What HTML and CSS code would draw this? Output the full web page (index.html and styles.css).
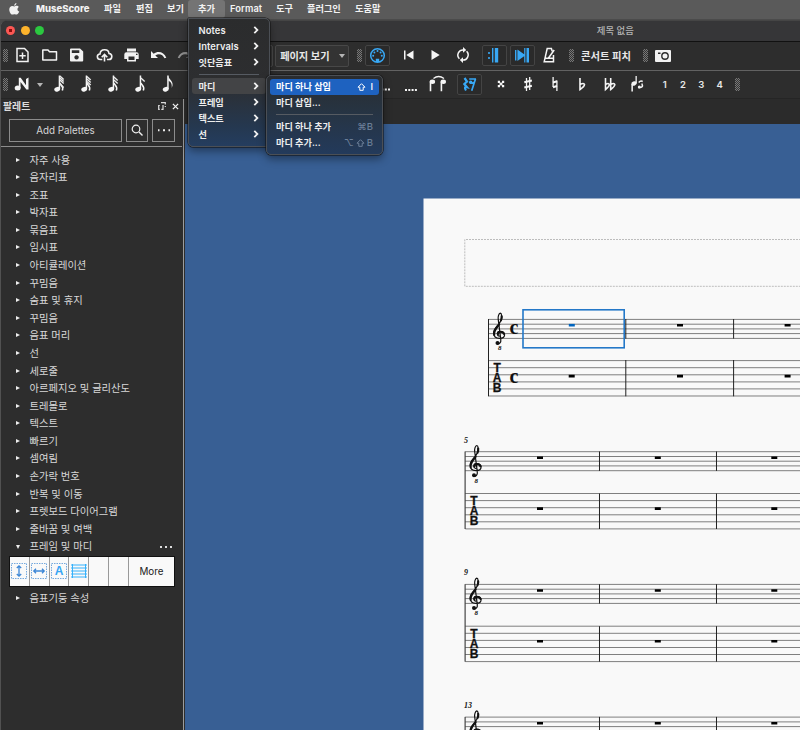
FILE: index.html
```html
<!DOCTYPE html>
<html lang="ko">
<head>
<meta charset="utf-8">
<title>MuseScore</title>
<link rel="stylesheet" href="styles.css">
</head>
<body>
<svg class="defs" width="0" height="0">
  <defs>
    <symbol id="chev" viewBox="0 0 6 8"><path d="M1.3.8 4.4 4 1.3 7.200" fill="none" stroke="#f2f2f2" stroke-width="1.800"/></symbol>
    <g id="note"><ellipse cx="-2.300" cy="5.300" rx="3" ry="2.300" transform="rotate(-20 -2.300 5.300)"/><path d="M-.8-8.500H.700V5H-.8z"/></g>
    <path id="flag" d="M.4-1C1 1.400 4.600 2 2.800 6.500" fill="none" stroke="#f5f5f5" stroke-width="1.600"/>
    <path id="hook" d="M.4-1 4.200 2.600" fill="none" stroke="#ececec" stroke-width="1.400"/>
    <g id="clef" fill="none" stroke="#111" stroke-linecap="round">
      <path stroke-width="1.200" d="M11.200 17C8.600 16.400 8.600 12.400 11.600 12.100 14.600 11.900 16.600 13.600 16.600 15.600 16.600 18 14.200 19.200 11.600 19.200 7.400 19.200 5.600 16.400 5.600 13.600 5.600 10 8.600 7.600 11 4.600 12.800 2.200 14-.6 13.600-3.600 13.500-5.200 12.900-6 12.300-6 10.800-5.800 9.800-2.400 10.200 0L12.800 20.400C13.200 23.400 11.400 24.900 9.600 24.800"/>
      <path stroke-width="2.100" d="M6.200 15.800C5.200 11.800 8.400 8.600 11.200 5.200M13 1.200Q14-.8 13.700-3M9.900 15Q9.800 13 12 12.600 15.200 12.400 16 14.800"/>
      <circle cx="9.500" cy="23.700" r="2" fill="#111" stroke="none"/>
      <text x="10" y="31" class="octave">8</text>
    </g>
    <g id="tab">
      <path class="line" d="M.5.3H340M.5 7.400H340M.5 14.500H340M.5 21.600H340M.5 28.600H340M.5 35.700H340"/>
      <text class="tabtext" x="9.200" y="12">T</text><text class="tabtext" x="9.200" y="21.900">A</text><text class="tabtext" x="9.200" y="31.700">B</text>
    </g>
    <g id="staff"><path class="line" d="M.5.2H340M.5 5H340M.5 9.700H340M.5 14.400H340M.5 19.200H340"/></g>
    <g id="system">
      <use href="#staff"/><use href="#tab" y="41.700"/><use href="#clef" x="-.3"/>
      <path class="bar" d="M.3 0V77.500M134.700 0V19.400M251.700 0V19.400M134.700 42V77.500M251.700 42V77.500"/>
      <path class="rest" d="M72.200 5h6v2.600h-6zM190 5h6v2.600h-6zM306.500 5h6v2.600h-6zM72.200 55.800h6v2.600h-6zM190 55.800h6v2.600h-6zM306.500 55.800h6v2.600h-6z"/>
    </g>
  </defs>
</svg>

<header class="menubar">
  <svg class="apple" viewBox="0 0 12 13"><path d="M8.1 0C8.2 1.500 7 2.900 5.700 2.900 5.600 1.500 6.800.2 8.100 0ZM5.900 3.700C6.500 3.700 7.200 3 8.300 3 9.300 3 10.200 3.500 10.700 4.300 8.500 5.600 8.900 8.600 11.200 9.300 10.600 10.900 9.500 12.600 8.300 12.600 7.400 12.600 7.100 12.100 6 12.100 4.900 12.100 4.500 12.600 3.700 12.600 2.100 12.600.3 9.600.3 7 .3 4.500 1.900 3.100 3.500 3.100 4.500 3.100 5.300 3.700 5.900 3.700Z" fill="#f2f2f2"/></svg>
  <span class="app">MuseScore</span><span class="m m1">파일</span><span class="m m2">편집</span><span class="m m3">보기</span><span class="m m4">추가</span><span class="m m5">Format</span><span class="m m6">도구</span><span class="m m7">플러그인</span><span class="m m8">도움말</span>
</header>

<div class="window">
  <div class="titlebar"><i class="dot red"></i><i class="dot yellow"></i><i class="dot green"></i><span class="title">제목 없음</span></div>

  <div class="toolbar first">
    <i class="grip"></i>
    <svg class="ic" viewBox="-12.500 -12 25 25"><path d="M-5.500-6.500H2L5.500-3V6.500H-5.500ZM0-2.500V4M-3.200.8H3.200" fill="none" stroke="#f2f2f2" stroke-width="1.500"/></svg>
    <svg class="ic" viewBox="-12.500 -12 25 25"><path d="M-6.700 5V-5H-1.500L0-3.300H7V5Z" fill="none" stroke="#f2f2f2" stroke-width="1.500" stroke-linejoin="round"/></svg>
    <svg class="ic" viewBox="-12.500 -12 25 25"><path fill="#f2f2f2" fill-rule="evenodd" d="M-5.500-6.500H3.500L6.700-3.500V5.500Q6.700 6.500 5.700 6.500H-5.500Q-6.500 6.500-6.500 5.500V-5.500Q-6.500-6.500-5.500-6.500ZM-4.700-4.700V-2H2.800V-4.700ZM0 .2A2.200 2.200 0 1 0 .1.200Z"/></svg>
    <svg class="ic" viewBox="-12.500 -12 25 25"><path d="M-2.200 4.500H-4C-8.200 4.500-8-1-4.500-1-4-6.500 4-6.500 4.500-1.500 8.500-1.200 8 4.500 4.500 4.500H2.400M0 6.500V-.2M-2.800 2.200 0-.6 2.800 2.200" fill="none" stroke="#f2f2f2" stroke-width="1.600"/></svg>
    <svg class="ic" viewBox="-12.500 -12 25 25"><path fill="#f2f2f2" fill-rule="evenodd" d="M-4.500-6.500H4.500V-3.600H-4.500ZM-5-2.800H5Q7.200-2.800 7.200-.6V4H4.500V6.600H-4.500V4H-7.200V-.6Q-7.200-2.800-5-2.800ZM-3 1.500V5H3V1.500ZM4.500-1.300V0H6V-1.300Z"/></svg>
    <svg class="ic" viewBox="-12.500 -12 25 25"><path fill="#f2f2f2" d="M-7.500-4V3H-.5L-3.200.4C.5-2.200 4.500-.5 6 3.300L7.800 2.700C5.600-3-.5-4.400-4.800-1.200Z"/></svg>
    <svg class="ic dim" viewBox="-12.500 -12 25 25"><path fill="#f2f2f2" d="M7.500-4V3H.5L3.200.4C-.5-2.200-4.500-.5-6 3.300L-7.800 2.700C-5.600-3 .5-4.400 4.800-1.200Z"/></svg>
    <span class="combo zoomer"></span>
    <span class="combo view">페이지 보기<i class="caret"></i></span>
    <i class="grip g2"></i>
    <svg class="ic on midi" viewBox="-12 -10 25 21"><circle r="6.800" cx=".5" cy=".5" fill="none" stroke="#38a8f5" stroke-width="1.500"/><g fill="#38a8f5"><circle cx="-3.800" cy=".8" r="1"/><circle cx="-2.600" cy="-2.500" r="1"/><circle cx=".5" cy="-3.900" r="1"/><circle cx="3.600" cy="-2.500" r="1"/><circle cx="4.800" cy=".8" r="1"/><path d="M-1.200 3.800h3.400V7h-3.400z"/></g></svg>
    <svg class="ic after" viewBox="-13 -12 25 25"><path fill="#f5f5f5" d="M-5-4.500H-3.500V4.500H-5ZM4.500-4.500V4.500L-2.700 0Z"/></svg>
    <svg class="ic" viewBox="-12 -12 25 25"><path fill="#f5f5f5" d="M-3.500-5V5L4.700 0Z"/></svg>
    <svg class="ic" viewBox="-12 -12 25 25"><path fill="none" stroke="#f5f5f5" stroke-width="1.500" d="M-3.600 3.800A5.200 5.200 0 0 1 1-5M3.600-3.800A5.200 5.200 0 0 1-1 5"/><path fill="#f5f5f5" d="M0-8V-2.200L3.200-5ZM0 8V2.200L-3.200 5Z"/></svg>
    <svg class="ic on repeat" viewBox="-12 -10 25 21"><g fill="#38a8f5"><circle cx="-5" cy="-2" r="1.100"/><circle cx="-5" cy="3" r="1.100"/><path d="M-2-7H-.6V7.500H-2ZM.8-7H4.200V7.500H.8Z"/></g></svg>
    <svg class="ic on" viewBox="-12 -10 25 21"><path fill="#38a8f5" d="M-7-5H-5.600V5.500H-7ZM-4.600-5.500 3.500.3-4.600 6ZM2.200-7H3.400V7.500H2.200ZM4.500-7H7V7.500H4.500Z"/></svg>
    <svg class="ic" viewBox="-12 -12 25 25"><path fill="none" stroke="#f5f5f5" stroke-width="1.500" d="M4.500 0V6.700H-4.800L-1.800-6.500H2.400L3.200-3.800M-3.500 3.300H4.500M-.5 3 5.200-5"/></svg>
    <i class="grip g3"></i><span class="pitch">콘서트 피치</span><i class="grip g4"></i>
    <svg class="camera" viewBox="0 0 16 12"><rect width="16" height="12" rx="1" fill="#f2f2f2"/><circle cx="10" cy="6" r="3.200" fill="none" stroke="#2d2d2d" stroke-width="1.400"/><path d="M3 2.500h2.500V4H3z" fill="#2d2d2d"/></svg>
  </div>

  <div class="toolbar second">
    <i class="grip"></i>
    <svg class="ic" viewBox="-12 -12 25 25"><g fill="#f5f5f5"><ellipse cx="-4.300" cy="4" rx="3" ry="2.500"/><path d="M-3.200-6.300 -1.300-6.300 4 1.300V-5L6.500-6.500V5.500H4.400L-1.500-2V4H-3.200Z"/></g></svg>
    <i class="caret c2"></i>
    <svg class="ic n1" viewBox="-11.500 -12 25 25"><g fill="#f5f5f5"><use href="#note"/><use href="#flag"/><use href="#hook" y="-7"/><use href="#hook" y="-5"/><use href="#hook" y="-3"/><use href="#hook" y="1"/></g></svg>
    <svg class="ic" viewBox="-11.500 -12 25 25"><g fill="#f5f5f5"><use href="#note"/><use href="#flag"/><use href="#hook" y="-6.500"/><use href="#hook" y="-4"/><use href="#hook" y="-1.500"/></g></svg>
    <svg class="ic" viewBox="-11.500 -12 25 25"><g fill="#f5f5f5"><use href="#note"/><use href="#flag"/><use href="#hook" y="-6"/><use href="#hook" y="-3"/></g></svg>
    <svg class="ic" viewBox="-11.500 -12 25 25"><g fill="#f5f5f5"><use href="#note"/><use href="#flag"/><use href="#hook" y="-5"/></g></svg>
    <svg class="ic" viewBox="-12 -12 25 25"><g fill="#f5f5f5"><use href="#note"/><path d="M0-8.500C.5-4.500 7-2.500 3.700 4 4.500-.5 2-3 .3-3.300Z"/></g></svg>
    <svg class="ic dots" viewBox="-12 -12 25 25"><path d="M-6 4.500h2v2h-2zM-2.500 4.500h2v2h-2zM.8 4.500h2v2h-2zM4 4.500h2v2h-2z" fill="#f5f5f5"/></svg>
    <svg class="ic" viewBox="-12 -12 25 25"><path d="M-6 5h2v2h-2zM-2.700 5h2v2h-2zM.6 5h2v2h-2zM3.900 5h2v2h-2z" fill="#f5f5f5"/></svg>
    <svg class="ic" viewBox="-12 -12 25 25"><g fill="#f5f5f5"><ellipse cx="-5.600" cy="-2.300" rx="2.700" ry="2.200"/><path d="M-8.300-2.500h1.600V7.200h-1.600z"/><ellipse cx="5.300" cy="-2.300" rx="2.700" ry="2.200"/><path d="M2.600-2.500h1.600V7.200h-1.600z"/><path d="M-4.500-5.500Q.5-9.500 6-5.500" fill="none" stroke="#f5f5f5" stroke-width="1.300"/></g></svg>
    <svg class="ic on rests" viewBox="-12 -10 25 21"><g fill="none" stroke="#38a8f5"><path stroke-width="2.200" d="M-4.500-6-2-2.500-4.700 0-2 3.200Q-5.500 2.500-3 6.500"/><path stroke-width="1.700" d="M.2-5H7M1-1.500Q4 0 5.500-2L2.700 6.800M5.500-2 6.500-5"/></g><circle cx="1.700" cy="-1.700" r="1.700" fill="#38a8f5"/></svg>
    <svg class="ic acc" viewBox="-12 -12 25 25"><path d="M-2.500-2.500 2.500 2.500M2.500-2.500-2.500 2.500" stroke="#f5f5f5" stroke-width="1.300"/><path fill="#f5f5f5" d="M-3.200-3.200h2.200v2.200h-2.200zM1-3.200h2.200v2.200H1zM-3.200 1h2.200v2.200h-2.200zM1 1h2.200v2.200H1z"/></svg>
    <svg class="ic" viewBox="-12 -12 25 25"><path d="M-1.500-6V7M1.700-7V6" stroke="#f5f5f5" stroke-width="1.300"/><path d="M-3.700-1.700 3.900-3.500M-3.700 3.500 3.900 1.700" stroke="#f5f5f5" stroke-width="2"/></svg>
    <svg class="ic" viewBox="-12 -12 25 25"><path d="M-1.900-7V3M1.900-3.500V7" stroke="#f5f5f5" stroke-width="1.300"/><path d="M-2-1.500 2-2.700M-2 3.200 2 2" stroke="#f5f5f5" stroke-width="2.100"/></svg>
    <svg class="ic" viewBox="-12 -12 25 25"><path d="M-2-6V5.500Q2.500 2.500 2.500.5 2-1.500-2 .5" fill="none" stroke="#f5f5f5" stroke-width="1.600"/></svg>
    <svg class="ic" viewBox="-12 -12 25 25"><path d="M-4.500-6V5.500Q-.7 2.500-.7.500-1.200-1.500-4.500.5M.7-6V5.500Q4.800 2.500 4.800.5 4.300-1.500.7.500" fill="none" stroke="#f5f5f5" stroke-width="1.600"/></svg>
    <svg class="ic" viewBox="-12 -12 25 25"><g fill="#f5f5f5"><ellipse cx="-3" cy="-.5" rx="2.700" ry="2.100" transform="rotate(-25 -3 -.5)"/><path d="M-5.600 0h1.500V7.500h-1.500zM-1.500-8h1.300V-.5h-1.300z"/><path d="M1.500 3.500Q7 3.800 4.800-.5M1.700-1.500Q3.600-3.800 5.700-2.500" fill="none" stroke="#f5f5f5" stroke-width="1.500"/><circle cx="2.300" cy="3" r="1.500"/></g></svg>
    <span class="voice v1">1</span><span class="voice">2</span><span class="voice">3</span><span class="voice">4</span>
    <i class="grip g5"></i>
  </div>

  <div class="main">
    <aside class="palettes">
      <div class="phead"><b>팔레트</b>
        <svg viewBox="0 0 8 8" class="float"><path d="M3 .700H7.300V5M5 3V7.300H.700V3.500H3" fill="none" stroke="#ddd" stroke-width="1.200" stroke-dasharray="6 1.500"/></svg>
        <svg viewBox="0 0 8 8" class="close"><path d="M1 1 7 7M7 1 1 7" stroke="#eee" stroke-width="1.500"/></svg></div>
      <div class="pbtns"><span class="btn add">Add Palettes</span>
        <span class="btn sq"><svg viewBox="0 0 12 12"><circle cx="5" cy="5" r="3.800" fill="none" stroke="#eee" stroke-width="1.200"/><path d="M8 8 11.500 11.500" stroke="#eee" stroke-width="1.400"/></svg></span>
        <span class="btn sq"><svg viewBox="1 0 12 12"><path d="M.5 5.300h2v2h-2zM6 5.300h2v2H6zM11.500 5.300h2v2h-2z" fill="#eee"/></svg></span></div>
      <ul class="list">
        <li>자주 사용</li><li>음자리표</li><li>조표</li><li>박자표</li><li>묶음표</li><li>임시표</li><li>아티큘레이션</li><li>꾸밈음</li><li>숨표 및 휴지</li><li>꾸밈음</li><li>음표 머리</li><li>선</li><li>세로줄</li><li>아르페지오 및 글리산도</li><li>트레몰로</li><li>텍스트</li><li>빠르기</li><li>셈여림</li><li>손가락 번호</li><li>반복 및 이동</li><li>프렛보드 다이어그램</li><li>줄바꿈 및 여백</li><li class="open">프레임 및 마디<span class="more-dots"><i></i><i></i><i></i></span></li>
      </ul>
      <div class="cells">
        <span><svg viewBox="0 0 16 16"><rect x=".5" y=".5" width="15" height="15" class="dash"/><path class="arrow" d="M8 3.500V12.500M5.800 5 8 2.800 10.200 5M5.800 11 8 13.200 10.200 11"/></svg></span>
        <span><svg viewBox="0 0 16 16"><rect x=".5" y=".5" width="15" height="15" class="dash"/><path class="arrow" d="M3.500 8H12.500M5 5.800 2.800 8 5 10.200M11 5.800 13.200 8 11 10.200"/></svg></span>
        <span><svg viewBox="0 0 16 16"><rect x=".5" y=".5" width="15" height="15" class="dash"/><text x="8" y="12.200" class="frame-a">A</text></svg></span>
        <span><svg viewBox="0 0 16 16"><path d="M0 2H16M0 5H16M0 8H16M0 11H16M0 14H16M1.500 1V15M14.500 1V15" stroke="#35b1fb" stroke-width="1" fill="none"/></svg></span>
        <span></span><span></span><span class="more">More</span>
      </div>
      <ul class="list last"><li>음표기둥 속성</li></ul>
    </aside>
    <section class="document">
      <div class="tabs"></div>
      <div class="canvas">
        <svg class="score" width="376" height="532" viewBox="424 198 376 532">
          <rect x="423.500" y="198.500" width="377" height="532" fill="#f9f9f9"/>
          <path d="M810 239.500H464.800V286.300H810" fill="none" stroke="#bdbdbd" stroke-dasharray="2 1"/>
          <use href="#staff" x="488" y="319.200"/><use href="#tab" x="488" y="360.300"/><use href="#clef" x="488" y="319.200"/>
          <text class="time" x="509.500" y="333.500">c</text><text class="time" x="509.500" y="382.800">c</text>
          <path class="bar" d="M488.500 319V396.300M625.800 319V338.600M733.600 319V338.600M625.800 360V396.300M733.600 360V396.300"/>
          <path class="rest" d="M677 323.900h6v2.600h-6zM784.600 323.900h6v2.600h-6zM568.700 374.800h6v2.600h-6zM677 374.800h6v2.600h-6zM784.600 374.800h6v2.600h-6z"/>
          <path d="M568.800 323.900h6v2.600h-6z" fill="#0065bf"/>
          <rect x="523" y="309.800" width="101.200" height="38" fill="none" stroke="#2478c8" stroke-width="1.600"/>
          <use href="#system" x="464.800" y="451.500"/><use href="#system" x="464.800" y="584.200"/><use href="#system" x="464.800" y="716.900"/>
          <text class="num" x="464" y="442.800">5</text><text class="num" x="464" y="575.400">9</text><text class="num" x="464" y="707.500">13</text>
        </svg>
      </div>
    </section>
  </div>
</div>

<nav class="menu root">
  <div class="item en">Notes<svg><use href="#chev"/></svg></div>
  <div class="item en">Intervals<svg><use href="#chev"/></svg></div>
  <div class="item">잇단음표<svg><use href="#chev"/></svg></div>
  <hr>
  <div class="item active">마디<svg><use href="#chev"/></svg></div>
  <div class="item">프레임<svg><use href="#chev"/></svg></div>
  <div class="item">텍스트<svg><use href="#chev"/></svg></div>
  <div class="item">선<svg><use href="#chev"/></svg></div>
</nav>
<nav class="menu sub">
  <div class="item chosen">마디 하나 삽입<kbd><svg class="shift" viewBox="0 0 9 8"><path d="M4.500.7 8 4.200H6.200V7.300H2.800V4.200H1Z"/></svg>I</kbd></div>
  <div class="item">마디 삽입...</div>
  <hr>
  <div class="item">마디 하나 추가<kbd>⌘B</kbd></div>
  <div class="item">마디 추가...<kbd>⌥<svg class="shift" viewBox="0 0 9 8"><path d="M4.500.7 8 4.200H6.200V7.300H2.800V4.200H1Z"/></svg>B</kbd></div>
</nav>
</body>
</html>
```
FILE: styles.css
```css
* { box-sizing: border-box; }
body { margin: 0; width: 800px; height: 730px; overflow: hidden; background: #4b4b4b; color: #e8e8e8; font-family: Inter, "Noto Sans CJK KR", sans-serif; font-size: 10px; position: relative; }
.defs { position: absolute; }
.menubar { height: 19px; background: #5a5a5a; display: flex; align-items: center; font-size: 9.2px; font-weight: 600; white-space: nowrap; color: #f2f2f2; line-height: 17px; padding: 0 0 2px 9px; }
.apple { width: 11px; height: 12px; margin: 0 16px 0 0; }
.app { width: 68px; font-weight: 800; font-size: 9.5px; }
.m { flex: none; }
.m1 { width: 32px; } .m2 { width: 31px; } .m3 { width: 21px; }
.m4 { width: 37px; height: 18px; text-align: center; background: #747474; border-radius: 3px; margin-right: 5px; }
.m5 { width: 46px; font-size: 9.3px; font-weight: 600; letter-spacing: .1px; } .m6 { width: 31px; } .m7 { width: 48px; }

.window { margin-top: 1px; height: 710px; background: #2d2d2d; border-radius: 7px 0 0; border-left: 1px solid #515151; border-top: 1px solid #454545; overflow: hidden; }
.titlebar { height: 21px; background: #363638; display: flex; align-items: center; border-bottom: 1px solid #111; padding: 0 0 1px 5px; font-size: 9.4px; color: #b4b4b4; }
.dot { width: 9px; height: 9px; border-radius: 50%; margin-right: 5.6px; }
.red { background: radial-gradient(circle, #8a0d0d 0 1.5px, #fc5753 2px); }
.yellow { background: #fdb32c; }
.green { background: #2bc840; }
.title { margin-left: 547px; line-height: 16px; font-weight: 500; }
.toolbar { display: flex; align-items: center; }
.first { height: 29px; padding-bottom: 1px; border-bottom: 1px solid #626262; }
.second { height: 27px; }
.grip { width: 5px; height: 13px; margin: 0 6px 0 2px; flex: none; background: repeating-conic-gradient(#777 0 25%, #333 0 50%) 0 0 / 2px 2px; }
.toolbar .grip:first-child { margin-right: 2px; }
.ic { width: 25px; height: 25px; flex: none; margin-right: 2.2px; overflow: visible; }
.dim { opacity: .5; margin-right: 0; }
.on { background: #2a2a2a; border-radius: 2px; outline: 1px solid #444; outline-offset: -1px; height: 21px; }
.combo { height: 22px; border: 1px solid #484848; border-radius: 2px; background: #333; flex: none; }
.zoomer { width: 75px; }
.view { width: 74px; margin-left: 2px; display: flex; align-items: center; padding-left: 4px; font-size: 10.2px; font-weight: 600; white-space: nowrap; }
.caret { border: 3px solid transparent; border-top: 4px solid #b5b5b5; border-bottom: 0; flex: none; }
.view .caret { margin-left: auto; margin-right: 3px; }
.g2 { margin: 0 3px 0 8px; }
.midi { margin-right: 2px; }
.after { margin-left: 4px; }
.repeat { margin-left: 4.800px; }
.g3 { margin: 0 7px 0 5px; }
.pitch { width: 52px; font-size: 10.3px; font-weight: 600; white-space: nowrap; }
.g4 { margin: 0 7px 0 10px; }
.camera { width: 16px; height: 12px; }
.c2 { margin-left: 0; }
.n1 { margin-left: 4.500px; }
.dots { margin-left: 188px; }
.rests { margin-left: 3.500px; }
.acc { margin-left: 5px; }
.voice { width: 18.3px; text-align: center; font-size: 9.5px; font-weight: 600; }
.v1 { margin-left: 3.500px; }
.g5 { margin-left: 6px; }

.main { display: flex; height: 632px; border-top: 1px solid #252525; }
.palettes { width: 183px; border-right: 1px solid #9c9c9c; flex: none; }
.phead { display: flex; height: 16px; align-items: center; padding: 0 0 2px 2px; font-size: 9.9px; color: #ddd; }
.phead b { font-weight: 600; width: 155px; line-height: 14px; }
.float { width: 8px; height: 8px; margin-right: 6px; }
.close { width: 7px; height: 7px; }
.pbtns { display: flex; gap: 4px; padding: 4px 0 0 8px; height: 32px; border-bottom: 1px solid #8d8d8d; margin-right: 1px; }
.btn { height: 22.500px; border: 1px solid #8c8c8c; display: flex; align-items: center; justify-content: center; }
.add { width: 113px; font-size: 9.8px; color: #d5d5d5; }
.sq { width: 22px; }
.sq + .sq { width: 23px; }
.sq svg { width: 12px; height: 12px; }
.list { list-style: none; margin: 0; padding: 4.300px 0 0; }
.list li { height: 17.59px; display: flex; align-items: center; padding-left: 28.5px; font-size: 10.3px; color: #d8d8d8; white-space: nowrap; line-height: 17px; position: relative; }
.list li::before { content: ""; position: absolute; left: 15px; top: 6.300px; border: 2.300px solid transparent; border-left: 4px solid #ededed; border-right: 0; }
.list li.open::before { left: 14.500px; top: 7px; border: 2.300px solid transparent; border-top: 4px solid #ededed; border-bottom: 0; }
.more-dots { display: flex; gap: 3px; margin-left: 68px; }
.more-dots i { width: 2px; height: 2px; background: #ddd; }
.cells { display: flex; margin-left: 8px; width: 166px; height: 31px; border: 1px solid #111; background: #f9f9f9; }
.cells span { width: 19.800px; border-right: 1px solid #999; display: flex; align-items: center; justify-content: center; flex: none; }
.cells svg { width: 16px; height: 16px; }
.cells .more { flex: 1; border: 0; color: #222; font-size: 9.8px; }
.dash { fill: none; stroke: #75a9de; stroke-dasharray: 1.500 1; }
.arrow { fill: none; stroke: #3c86d6; stroke-width: 1.300; }
.frame-a { font: bold 12px "Liberation Sans", sans-serif; fill: #35a5f5; text-anchor: middle; }
.last { padding-top: 2.700px; }
.document { flex: 1; margin-left: 1px; display: flex; flex-direction: column; }
.tabs { height: 24.500px; background: #2b2b2b; flex: none; }
.canvas { flex: 1; background: #385f94; display: flex; justify-content: flex-end; padding-top: 74.500px; }
.score { flex: none; overflow: visible; }
.line { stroke: #555; stroke-width: .75; fill: none; }
.bar { stroke: #222; stroke-width: 1; fill: none; }
.rest { fill: #000; }
.tabtext { font: bold 12px "Liberation Sans", sans-serif; fill: #111; stroke: #111; stroke-width: .3; text-anchor: middle; }
.octave { font: italic bold 7px "Liberation Serif", serif; fill: #111; stroke: none; }
.time { font: bold 20px "Liberation Serif", serif; fill: #111; }
.num { font: italic bold 8px "Liberation Serif", serif; fill: #111; }

.menu { position: absolute; border: 1px solid #4b4f55; border-radius: 5px; font-size: 9.15px; font-weight: 600; box-shadow: 0 0 0 .5px #111, 0 4px 9px rgba(0,0,0,.4); padding: 3px; color: #eee; }
.root { left: 188px; top: 18px; width: 82px; height: 129px; background: linear-gradient(#2b2c2d 0, #2d2e30 50%, #253850 85%, #243d5f 100%); border-top-left-radius: 1px; }
.sub { left: 266px; top: 75px; width: 117px; height: 80px; background: linear-gradient(#2a2c2f 0, #273340 40%, #233a5b 100%); padding: 2.500px 3px; }
.item { height: 16px; display: flex; align-items: center; padding: 0 7px 0 6.500px; line-height: 15px; white-space: nowrap; border-radius: 3px; }
.item > svg { width: 6px; height: 8px; margin-left: auto; }
.en { font-size: 9.4px; font-weight: 600; letter-spacing: .1px; }
.menu hr { border: 0; height: 1px; margin: 3.500px 7px; background: #565b62; }
.active { background: #434446; }
.sub hr { margin: 3.500px 6px; }
.sub .item { padding: 0 6px; }
.chosen { background: #1e62c0; color: #fff; }
kbd { margin-left: auto; display: flex; align-items: center; font: 500 9.5px Inter, "DejaVu Sans", sans-serif; gap: 2px; color: #6c7f98; }
.chosen kbd { color: #fff; gap: 4px; }
.shift { width: 9px; height: 8px; fill: none; stroke: currentColor; stroke-width: 1; }
```
